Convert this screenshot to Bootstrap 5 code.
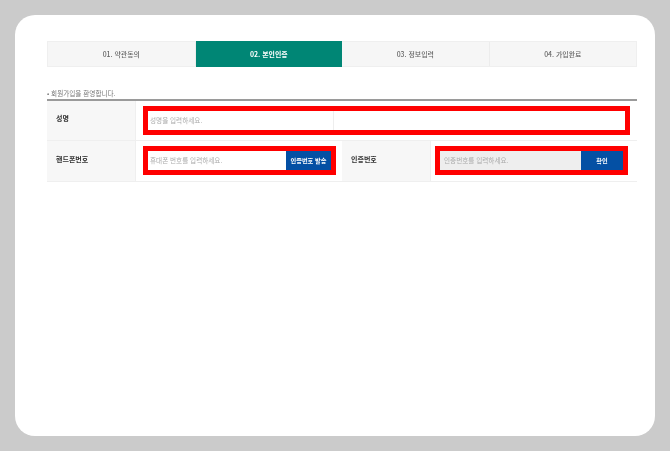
<!DOCTYPE html>
<html lang="ko">
<head>
<meta charset="utf-8">
<title>본인인증</title>
<link href="https://cdn.jsdelivr.net/npm/bootstrap@5.3.0/dist/css/bootstrap.min.css" rel="stylesheet">
<style>
html,body{height:100%}
body{background:#cbcbcb;font-family:"Noto Sans CJK KR","Liberation Sans",sans-serif;padding:15px;overflow:hidden;min-height:451px}
.sheet{background:#fff;border-radius:20px;width:640px;height:421px;padding:26px 18px 0 32px}
.soft{filter:blur(.3px)}
.steps{height:26px;background:#f6f6f6;border:1px solid #efefef}
.step{flex:1 1 0;display:flex;align-items:center;justify-content:center;font-size:6.9px;color:#666;border-right:1px solid #ececec;font-weight:500;padding-top:1px}
.step:last-child{border-right:0}
.step-on{background:#008675;color:#fff;font-weight:700;margin:-1px 0;border-right:0}
.intro{font-size:6.6px;color:#777;margin:21px 0 0;line-height:10px;height:11px}
.rule{height:2px;background:#9a9a9a}
.frow{display:flex;border-bottom:1px solid #efefef;height:40px}
.frow-last{height:41px}
.lbl{width:89px;background:#f7f7f7;border-right:1px solid #efefef;font-size:7px;font-weight:700;color:#333;padding:12px 0 0 9px;flex:none;line-height:11px}
.frow-last .lbl{padding-top:13px}
.val{flex:1 1 0;min-width:0;padding:5px 0 0 7px}
.red{border:5px solid #f00;height:29px;display:flex;background:#fff}
.ph{font-size:6.6px;color:#aaa;padding-left:2px;display:flex;align-items:center;flex:1 1 0;min-width:0;line-height:1}
.ph-half{flex:none;width:186px;border-right:1px solid #eee}
.ph-gray{background:#eee;padding-left:4px}
.act{background:#0450a4;color:#fff;font-size:6.2px;font-weight:700;display:flex;align-items:center;justify-content:center;flex:none;height:19px}
.w1{width:45px}.w2{width:42px}
.half{flex:none;width:206px}
.half-r{flex:1 1 0;padding-left:4px}
.w-red-1{width:487px}
.w-red-2{width:193px}
.w-red-3{width:193px}
</style>
</head>
<body>
<div class="sheet">
  <div class="steps d-flex soft">
    <div class="step">01. 약관동의</div>
    <div class="step step-on">02. 본인인증</div>
    <div class="step">03. 정보입력</div>
    <div class="step">04. 가입완료</div>
  </div>
  <p class="intro soft">• 회원가입을 환영합니다.</p>
  <div class="rule soft"></div>
  <div class="frow soft">
    <div class="lbl">성명</div>
    <div class="val">
      <div class="red w-red-1"><div class="ph ph-half">성명을 입력하세요.</div><div class="ph"></div></div>
    </div>
  </div>
  <div class="frow frow-last soft">
    <div class="lbl">핸드폰번호</div>
    <div class="val half">
      <div class="red w-red-2"><div class="ph">휴대폰 번호를 입력하세요.</div><div class="act w1">인증번호 발송</div></div>
    </div>
    <div class="lbl">인증번호</div>
    <div class="val half-r">
      <div class="red w-red-3"><div class="ph ph-gray">인증번호를 입력하세요.</div><div class="act w2">확인</div></div>
    </div>
  </div>
</div>
<script src="https://cdn.jsdelivr.net/npm/bootstrap@5.3.0/dist/js/bootstrap.bundle.min.js"></script>
</body>
</html>
